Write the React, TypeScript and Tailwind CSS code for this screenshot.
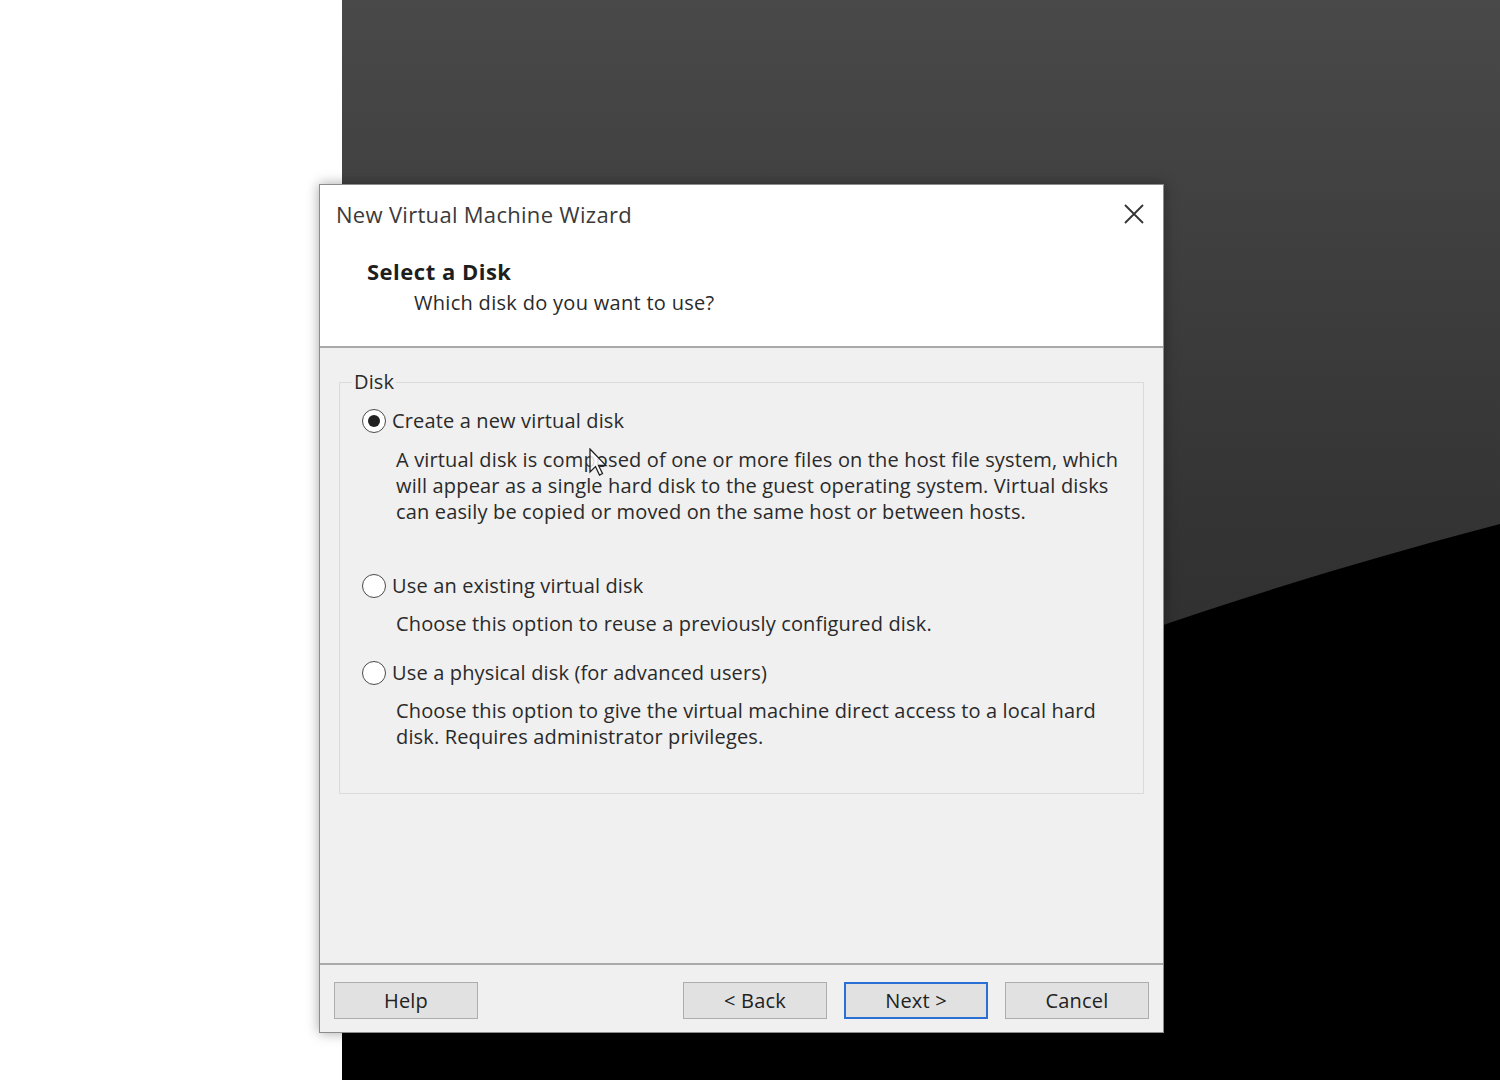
import React from "react";

const font = { fontFamily: '"Open Sans", "Noto Sans", sans-serif' };

function Radio({ checked }: { checked?: boolean }) {
  return (
    <span className="flex h-[24px] w-[24px] shrink-0 items-center justify-center rounded-full border-[1.5px] border-[#4a4a4a] bg-white">
      {checked && <span className="h-[12px] w-[12px] rounded-full bg-[#222]" />}
    </span>
  );
}

function WinButton({ title, primary }: { title: string; primary?: boolean }) {
  return (
    <button
      className={
        "h-[37px] w-[144px] bg-[#e1e1e1] text-[20px] tracking-[0.2px] text-[#222] " +
        (primary ? "border-2 border-[#2a6fd3]" : "border border-[#adadad]")
      }
    >
      {title}
    </button>
  );
}

export default function App() {
  return (
    <div className="relative flex h-[1080px] w-[1500px] overflow-hidden bg-white" style={font}>
      {/* desktop background */}
      <div className="w-[342px] bg-white" />
      <div className="relative flex-1 bg-gradient-to-b from-[#494949] via-[#333333] to-[#262626]">
        <svg className="absolute inset-0" width="1158" height="1080" viewBox="0 0 1158 1080">
          <path d="M0 1020 C 300 830, 640 660, 1158 524 L1158 1080 L0 1080 Z" fill="#000" />
        </svg>
      </div>

      {/* wizard window */}
      <div className="absolute left-[319px] top-[184px] flex h-[849px] w-[845px] flex-col border border-[#8c8c8c] bg-[#f0f0f0] shadow-[0_0_12px_rgba(0,0,0,0.35)]">
        <div className="border-b-2 border-[#a9a9a9] bg-white pb-[30px]">
          <div className="flex h-[58px] items-center justify-between pl-[16px] pr-[18px]">
            <span className="text-[22px] tracking-[0.3px] text-[#3a3a3a]">New Virtual Machine Wizard</span>
            <svg width="22" height="22" viewBox="0 0 22 22">
              <path d="M2 2 L20 20 M20 2 L2 20" stroke="#333" strokeWidth="1.8" />
            </svg>
          </div>
          <div className="mt-[15px] pl-[47px] text-[22px] font-bold leading-[26px] tracking-[0.5px] text-[#1e1e1e]">Select a Disk</div>
          <div className="mt-[6px] pl-[94px] text-[20px] leading-[26px] tracking-[0.3px] text-[#2a2a2a]">Which disk do you want to use?</div>
        </div>

        <div className="flex-1 px-[19px] pt-[22px]">
          <fieldset className="border border-[#dadada] pb-[43px] pl-[22px] pr-[16px] text-[20px] leading-[26px] tracking-[0.15px] text-[#2a2a2a]">
            <legend className="-ml-[10px] px-[2px] leading-[24px]">Disk</legend>
            <div className="mt-[14px] flex items-center gap-[6px]">
              <Radio checked />
              <span>Create a new virtual disk</span>
            </div>
            <div className="ml-[34px] mt-[13px] whitespace-nowrap">
              <div>A virtual disk is composed of one or more files on the host file system, which</div>
              <div>will appear as a single hard disk to the guest operating system. Virtual disks</div>
              <div>can easily be copied or moved on the same host or between hosts.</div>
            </div>
            <div className="mt-[48px] flex items-center gap-[6px]">
              <Radio />
              <span>Use an existing virtual disk</span>
            </div>
            <div className="ml-[34px] mt-[12px] whitespace-nowrap">Choose this option to reuse a previously configured disk.</div>
            <div className="mt-[23px] flex items-center gap-[6px]">
              <Radio />
              <span>Use a physical disk (for advanced users)</span>
            </div>
            <div className="ml-[34px] mt-[12px] whitespace-nowrap">
              <div>Choose this option to give the virtual machine direct access to a local hard</div>
              <div>disk. Requires administrator privileges.</div>
            </div>
          </fieldset>
        </div>

        <div className="flex items-center border-t-2 border-[#a9a9a9] pb-[13px] pl-[14px] pr-[14px] pt-[17px]">
          <WinButton title="Help" />
          <div className="flex-1" />
          <div className="flex gap-[17px]">
            <WinButton title="< Back" />
            <WinButton title="Next >" primary />
            <WinButton title="Cancel" />
          </div>
        </div>
      </div>

      {/* mouse pointer */}
      <svg className="absolute left-[589px] top-[448px]" width="20" height="30" viewBox="0 0 20 30">
        <path d="M1 1 L1 24 L6.5 18.5 L10.5 27 L13.5 25.5 L9.5 17.5 L17 17.5 Z" fill="rgba(255,255,255,0.85)" stroke="#222" strokeWidth="1.3" />
      </svg>
    </div>
  );
}
